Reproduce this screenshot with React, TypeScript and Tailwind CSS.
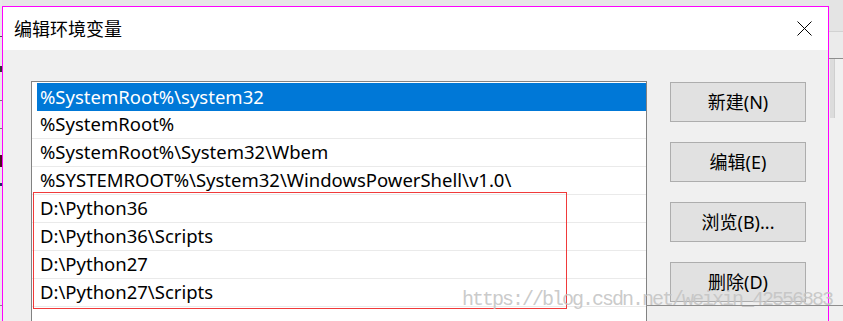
import React from "react";

const rows = [
  "%SystemRoot%\\system32",
  "%SystemRoot%",
  "%SystemRoot%\\System32\\Wbem",
  "%SYSTEMROOT%\\System32\\WindowsPowerShell\\v1.0\\",
  "D:\\Python36",
  "D:\\Python36\\Scripts",
  "D:\\Python27",
  "D:\\Python27\\Scripts",
];

const buttons = ["新建(N)", "编辑(E)", "浏览(B)...", "删除(D)"];

export default function App() {
  return (
    <div className="relative w-[843px] h-[321px] overflow-hidden bg-[#e6e6e6] font-['Noto_Sans','Noto_Sans_CJK_SC',sans-serif] text-black">
      <div className="flex h-full">
        {/* left background strip */}
        <div className="relative w-[2px] h-full bg-[#e9e9e9]">
          <div className="absolute left-0 top-[36px] w-[2px] h-[1px] bg-[#555]" />
          <div className="absolute left-0 top-[66px] w-[2px] h-[6px] bg-[#333]" />
          <div className="absolute left-0 top-[100px] w-[2px] h-[1px] bg-[#777]" />
          <div className="absolute left-0 top-[128px] w-[2px] h-[1px] bg-[#777]" />
          <div className="absolute left-0 top-[155px] w-[2px] h-[12px] bg-[#4a1020]" />
          <div className="absolute left-0 top-[183px] w-[2px] h-[3px] bg-[#203060]" />
          <div className="absolute left-0 top-[305px] w-[2px] h-[1px] bg-[#888]" />
        </div>

        {/* dialog */}
        <div className="mt-[6px] w-[827px] flex flex-col border border-b-0 border-[#ff00ff] bg-[#f0f0f0]">
          <div className="h-[43px] shrink-0 bg-white flex items-center justify-between pl-[11px] pr-[16px]">
            <span className="text-[18px] leading-none">编辑环境变量</span>
            <svg width="15" height="15" viewBox="0 0 15 15" className="block">
              <path d="M0.5 0.5 L14.5 14.5 M14.5 0.5 L0.5 14.5" stroke="#000" strokeWidth="1" fill="none" />
            </svg>
          </div>
          <div className="flex items-start pt-[31px] pl-[28px] pr-[22px] gap-[23px]">
            <div className="w-[616px] h-[260px] shrink-0 border border-b-0 border-[#828282] bg-white pt-[1px]">
              {rows.map((r, i) =>
                i === 0 ? (
                  <div
                    key={i}
                    className="h-[28px] ml-[5px] pl-[3px] flex items-center bg-[#0078d7] text-white text-[18.5px] leading-none whitespace-nowrap"
                  >
                    {r}
                  </div>
                ) : (
                  <div
                    key={i}
                    className="h-[28px] pl-[8px] flex items-center border-b border-[#eaeaea] text-[18.5px] leading-none whitespace-nowrap"
                  >
                    {r}
                  </div>
                )
              )}
            </div>
            <div className="w-[136px] shrink-0 mt-[1px] flex flex-col gap-[20px]">
              {buttons.map((b) => (
                <div
                  key={b}
                  className="h-[40px] flex items-center justify-center bg-[#e1e1e1] border border-[#adadad] text-[18px] leading-none"
                >
                  {b}
                </div>
              ))}
            </div>
          </div>
        </div>

        {/* right background strip */}
        <div className="flex-1 flex flex-col">
          <div className="h-[31px] bg-[#e4e4e4]" />
          <div className="h-[1px] bg-[#d2d2d2]" />
          <div className="h-[26px] bg-[#ebebeb]" />
          <div className="h-[1px] bg-[#8e8e8e]" />
          <div className="flex-1 bg-[#f0f0f0] pl-[1px]">
            <div className="w-[5px] h-[59px] bg-[#dcdcdc] border-r border-[#cfcfcf]" />
          </div>
        </div>
      </div>

      {/* annotation rectangle */}
      <div className="absolute left-[33px] top-[192px] w-[534px] h-[117px] border border-[#f03a3a]" />

      {/* stray line */}
      <div className="absolute left-[646px] top-[305px] w-[197px] h-[1px] bg-[#8e8e8e]" />

      {/* watermark */}
      <div className="absolute left-[462px] top-[289px] text-[20px] leading-[22px] tracking-[-2px] font-['Liberation_Mono',monospace] text-[#c4c4c4]/90 whitespace-nowrap">
        https://blog.csdn.net/weixin_42556883
      </div>
    </div>
  );
}
